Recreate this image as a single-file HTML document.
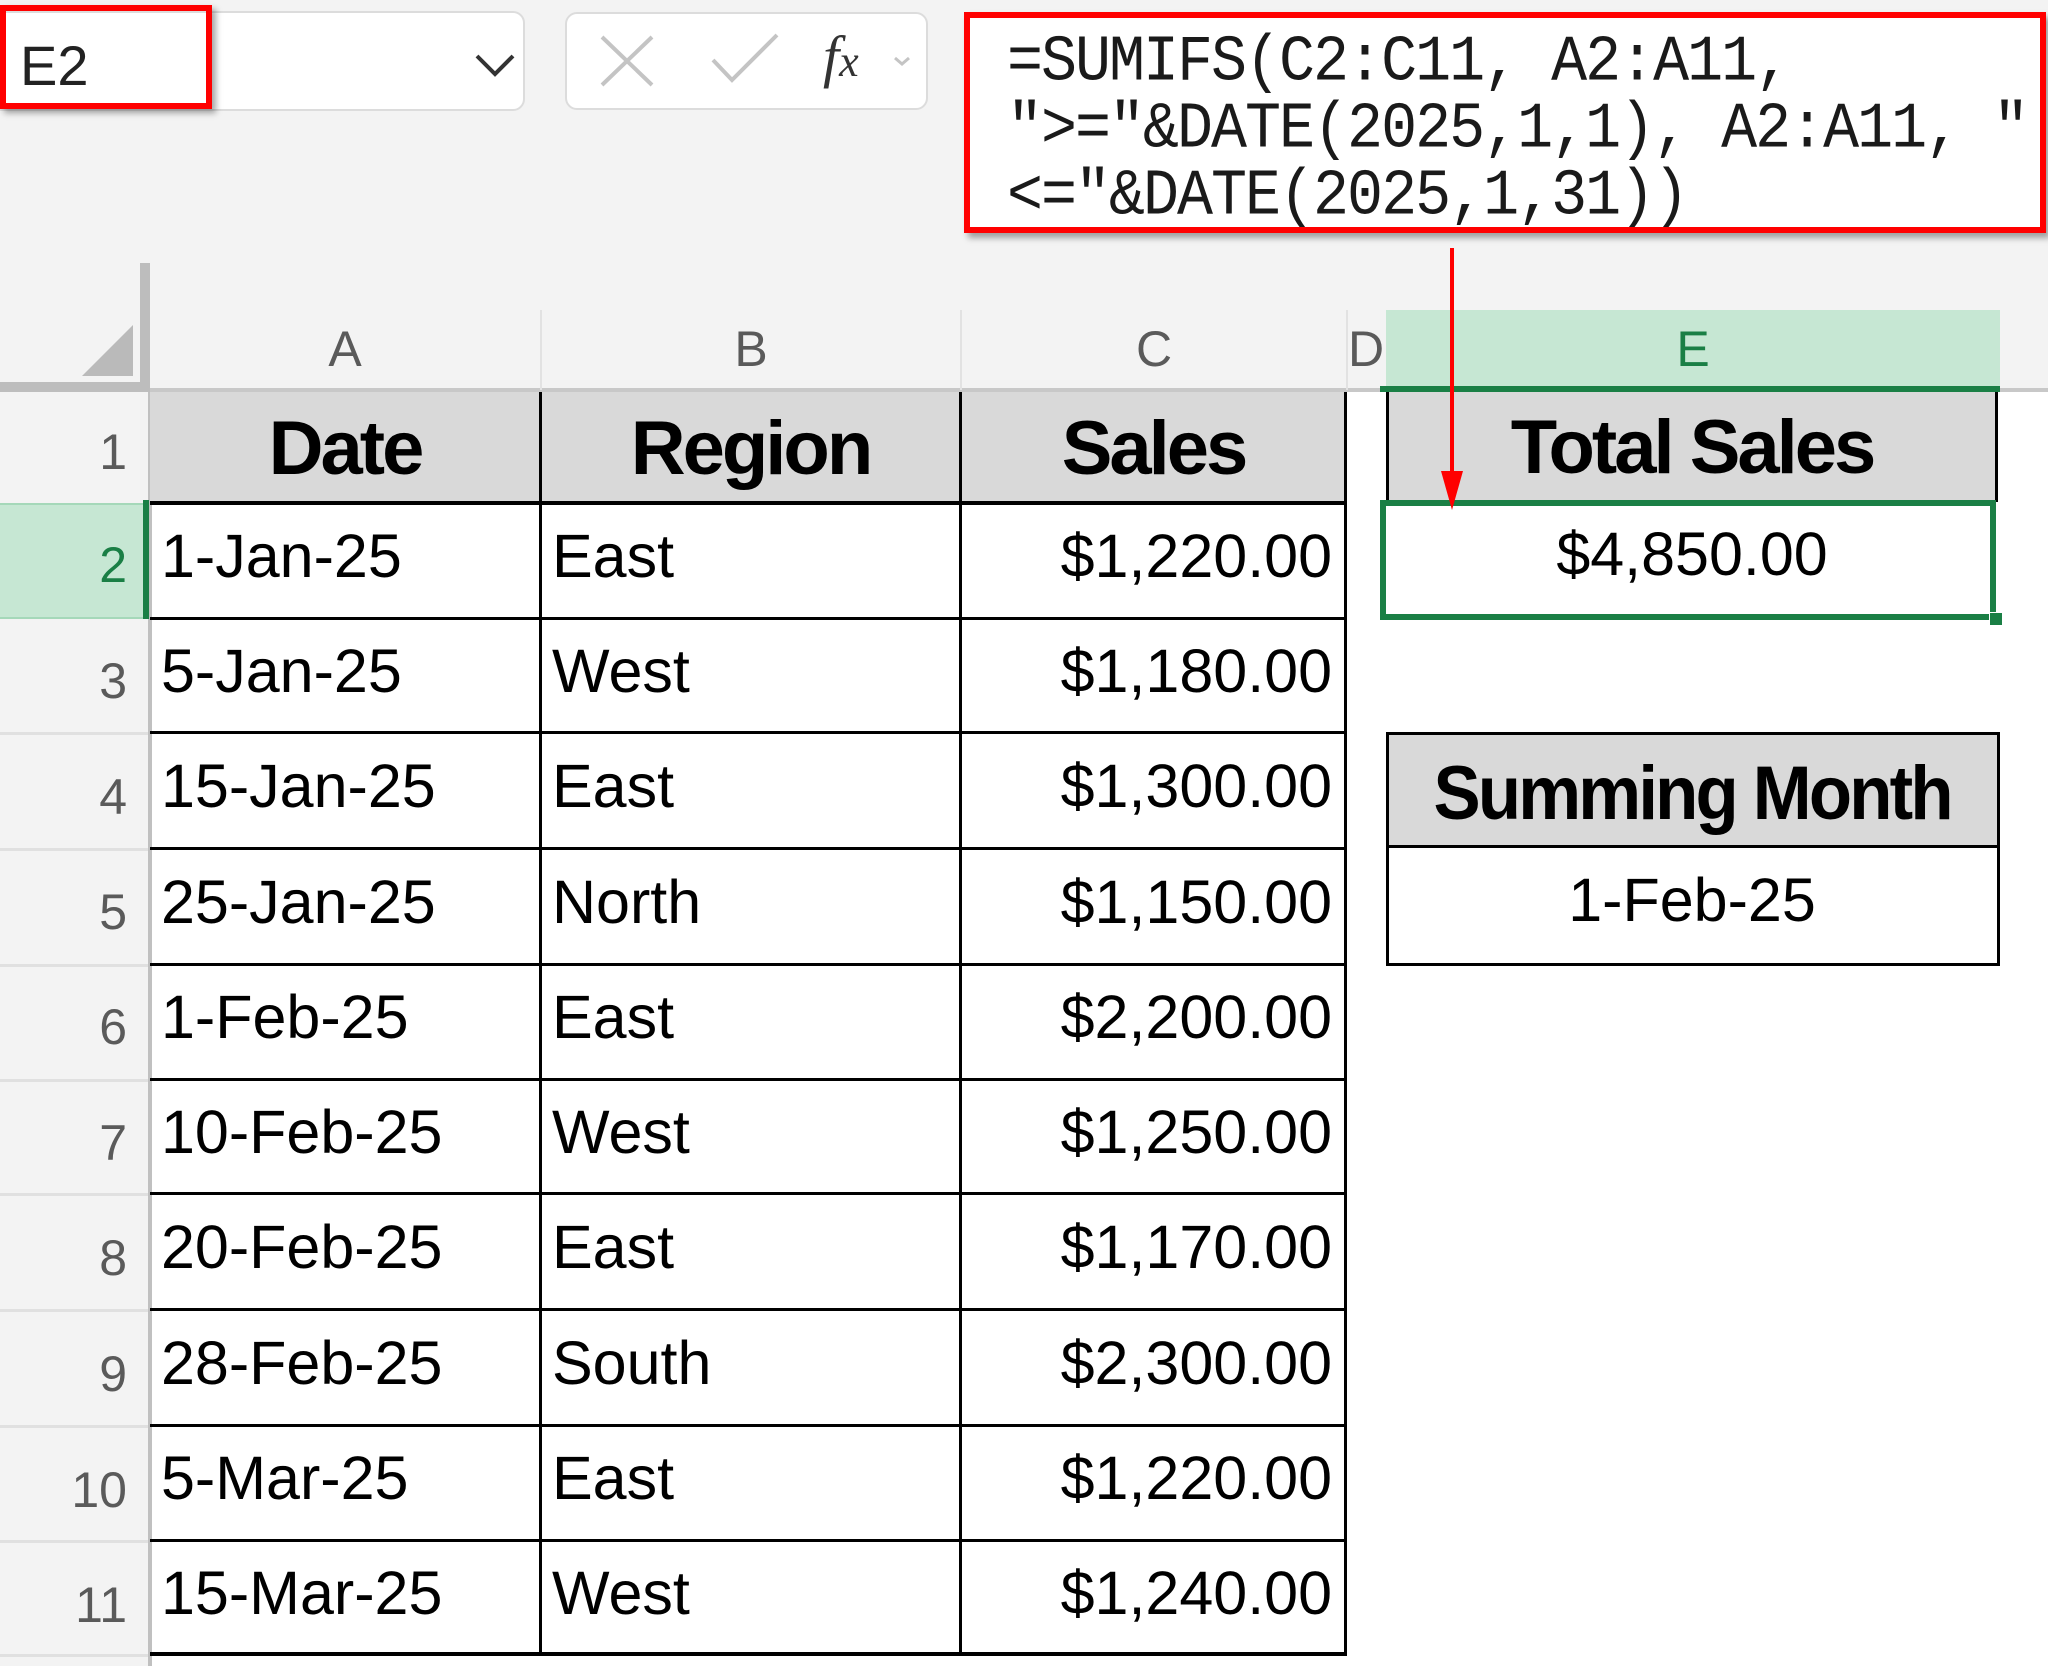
<!DOCTYPE html>
<html><head><meta charset="utf-8"><style>
*{margin:0;padding:0;box-sizing:border-box}
body{width:2048px;height:1666px;background:#f3f3f3;position:relative;overflow:hidden;font-family:"Liberation Sans",Arial,sans-serif}
.a{position:absolute}
.rn{position:absolute;left:0;width:127px;text-align:right;font-size:50px;color:#5a5a5a;line-height:1}
.cl{position:absolute;top:324px;font-size:50px;color:#5a5a5a;line-height:1;text-align:center}
.c{position:absolute;font-size:61px;color:#000;line-height:1;white-space:nowrap}
.h{position:absolute;font-size:76px;font-weight:bold;letter-spacing:-3px;color:#000;line-height:1;text-align:center;white-space:nowrap}
.mono{font-family:"Liberation Mono",monospace;font-size:60px;letter-spacing:-2px;color:#1a1a1a;position:absolute;left:1007px;line-height:1;white-space:pre;transform:scaleY(1.08);transform-origin:0 0}
</style></head><body>

<div class="a" style="left:-10px;top:11px;width:535px;height:100px;background:#fff;border:2px solid #dcdcdc;border-radius:12px"></div>
<div class="a" style="left:0;top:5px;width:212px;height:104px;border:6px solid #ff0000;box-shadow:4px 4px 6px rgba(0,0,0,.35)"></div>
<div class="a" style="left:20px;top:38px;font-size:56px;color:#222;line-height:1">E2</div>
<svg class="a" style="left:474px;top:50px" width="42" height="30"><path d="M3 6 L21 24 L39 6" fill="none" stroke="#333" stroke-width="4"/></svg>

<div class="a" style="left:565px;top:12px;width:363px;height:98px;background:#fff;border:2px solid #dcdcdc;border-radius:12px"></div>
<svg class="a" style="left:595px;top:30px" width="330" height="62">
<path d="M7 7 L57 55 M57 7 L7 55" stroke="#c4c4c4" stroke-width="4"/>
<path d="M118 30 L137 50 L182 5" fill="none" stroke="#c4c4c4" stroke-width="4"/>
<path d="M300 28 L307 34 L314 28" fill="none" stroke="#c4c4c4" stroke-width="3"/>
</svg>
<div class="a" style="left:823px;top:28px;font-family:'Liberation Serif',serif;font-style:italic;font-size:58px;color:#333;line-height:1">f<span style="font-size:44px">x</span></div>

<div class="a" style="left:964px;top:12px;width:1082px;height:221px;background:#fff;border:6px solid #ff0000;box-shadow:4px 5px 6px rgba(0,0,0,.35)"></div>
<div class="mono" style="top:31px">=SUMIFS(C2:C11, A2:A11,</div>
<div class="mono" style="top:98px">"&gt;="&amp;DATE(2025,1,1), A2:A11, "</div>
<div class="mono" style="top:165px">&lt;="&amp;DATE(2025,1,31))</div>

<div class="a" style="left:140px;top:263px;width:10px;height:129px;background:#bdbdbd"></div>
<div class="a" style="left:0;top:382px;width:150px;height:10px;background:#bdbdbd"></div>
<svg class="a" style="left:82px;top:325px" width="52" height="51"><path d="M51 0 L51 51 L0 51 Z" fill="#bababa"/></svg>

<div class="a" style="left:150px;top:388px;width:1898px;height:4px;background:#c8c8c8"></div>
<div class="a" style="left:540px;top:310px;width:2px;height:80px;background:#e2e2e2"></div>
<div class="a" style="left:960px;top:310px;width:2px;height:80px;background:#e2e2e2"></div>
<div class="a" style="left:1346px;top:310px;width:2px;height:80px;background:#e2e2e2"></div>
<div class="a" style="left:1386px;top:310px;width:614px;height:80px;background:#c6e7d3"></div>
<div class="a" style="left:1380px;top:386px;width:620px;height:6px;background:#1a7f45"></div>
<div class="cl" style="left:150px;width:390px">A</div>
<div class="cl" style="left:542px;width:418px">B</div>
<div class="cl" style="left:962px;width:384px">C</div>
<div class="cl" style="left:1348px;width:38px;text-align:left">D</div>
<div class="cl" style="left:1386px;width:614px;color:#1a7f45">E</div>

<div class="a" style="left:148px;top:392px;width:4px;height:1274px;background:#c0c0c0"></div>
<div class="a" style="left:0;top:503px;width:148px;height:116px;background:#c6e7d3;border-top:2px solid #a5d8b9;border-bottom:2px solid #a5d8b9"></div>
<div class="a" style="left:143px;top:500px;width:6px;height:119px;background:#1a7f45"></div>

<div class="a" style="left:152px;top:392px;width:1896px;height:1274px;background:#fff"></div>

<div class="a" style="left:150px;top:392px;width:1197px;height:111px;background:#d9d9d9"></div>
<svg class="a" style="left:0;top:0" width="2048" height="1666">
<g fill="#e0e0e0">
<rect x="0" y="732" width="148" height="3"/><rect x="0" y="848" width="148" height="3"/><rect x="0" y="964" width="148" height="3"/>
<rect x="0" y="1079" width="148" height="3"/><rect x="0" y="1193" width="148" height="3"/><rect x="0" y="1309" width="148" height="3"/>
<rect x="0" y="1425" width="148" height="3"/><rect x="0" y="1540" width="148" height="3"/><rect x="0" y="1654" width="148" height="3"/>
</g>
<g fill="#000">
<rect x="150" y="501" width="1197" height="4"/><rect x="150" y="617" width="1197" height="3"/>
<rect x="150" y="731" width="1197" height="3"/><rect x="150" y="847" width="1197" height="3"/>
<rect x="150" y="963" width="1197" height="3"/><rect x="150" y="1078" width="1197" height="3"/>
<rect x="150" y="1192" width="1197" height="3"/><rect x="150" y="1308" width="1197" height="3"/>
<rect x="150" y="1424" width="1197" height="3"/><rect x="150" y="1539" width="1197" height="3"/>
<rect x="150" y="1652" width="1197" height="4"/>
<rect x="539" y="392" width="3" height="1264"/><rect x="959" y="392" width="3" height="1264"/><rect x="1344" y="392" width="3" height="1264"/>
</g>
</svg>

<div class="h" style="left:150px;top:411px;width:390px">Date</div>
<div class="h" style="left:541px;top:411px;width:419px">Region</div>
<div class="h" style="left:961px;top:411px;width:385px">Sales</div>

<div class="rn" style="top:427px">1</div>
<div class="rn" style="top:540px;color:#1a7f45">2</div>
<div class="rn" style="top:656px">3</div>
<div class="rn" style="top:772px">4</div>
<div class="rn" style="top:887px">5</div>
<div class="rn" style="top:1002px">6</div>
<div class="rn" style="top:1118px">7</div>
<div class="rn" style="top:1233px">8</div>
<div class="rn" style="top:1349px">9</div>
<div class="rn" style="top:1465px">10</div>
<div class="rn" style="top:1580px">11</div>

<div class="c" style="left:161px;top:526px">1-Jan-25</div><div class="c" style="left:552px;top:526px">East</div><div class="c" style="right:716px;top:526px">$1,220.00</div>
<div class="c" style="left:161px;top:641px">5-Jan-25</div><div class="c" style="left:552px;top:641px">West</div><div class="c" style="right:716px;top:641px">$1,180.00</div>
<div class="c" style="left:161px;top:756px">15-Jan-25</div><div class="c" style="left:552px;top:756px">East</div><div class="c" style="right:716px;top:756px">$1,300.00</div>
<div class="c" style="left:161px;top:872px">25-Jan-25</div><div class="c" style="left:552px;top:872px">North</div><div class="c" style="right:716px;top:872px">$1,150.00</div>
<div class="c" style="left:161px;top:987px">1-Feb-25</div><div class="c" style="left:552px;top:987px">East</div><div class="c" style="right:716px;top:987px">$2,200.00</div>
<div class="c" style="left:161px;top:1102px">10-Feb-25</div><div class="c" style="left:552px;top:1102px">West</div><div class="c" style="right:716px;top:1102px">$1,250.00</div>
<div class="c" style="left:161px;top:1217px">20-Feb-25</div><div class="c" style="left:552px;top:1217px">East</div><div class="c" style="right:716px;top:1217px">$1,170.00</div>
<div class="c" style="left:161px;top:1333px">28-Feb-25</div><div class="c" style="left:552px;top:1333px">South</div><div class="c" style="right:716px;top:1333px">$2,300.00</div>
<div class="c" style="left:161px;top:1448px">5-Mar-25</div><div class="c" style="left:552px;top:1448px">East</div><div class="c" style="right:716px;top:1448px">$1,220.00</div>
<div class="c" style="left:161px;top:1563px">15-Mar-25</div><div class="c" style="left:552px;top:1563px">West</div><div class="c" style="right:716px;top:1563px">$1,240.00</div>

<div class="a" style="left:1386px;top:392px;width:612px;height:110px;background:#d9d9d9;border-left:3px solid #000;border-right:3px solid #000"></div>
<div class="h" style="left:1386px;top:410px;width:612px">Total Sales</div>
<div class="a" style="left:1380px;top:500px;width:616px;height:120px;border:6px solid #1a7f45"></div>
<div class="a" style="left:1989px;top:612px;width:14px;height:14px;background:#1a7f45;border:1px solid #fff"></div>
<div class="c" style="left:1386px;top:524px;width:612px;text-align:center">$4,850.00</div>

<div class="a" style="left:1386px;top:732px;width:614px;height:234px;border:3px solid #000"></div>
<div class="a" style="left:1389px;top:735px;width:608px;height:113px;background:#d9d9d9;border-bottom:3px solid #000"></div>
<div class="h" style="left:1386px;top:756px;width:612px"><span style="display:inline-block;transform:scaleX(.93)">Summing Month</span></div>
<div class="c" style="left:1386px;top:870px;width:612px;text-align:center">1-Feb-25</div>

<svg class="a" style="left:1430px;top:245px" width="50" height="275">
<line x1="22" y1="3" x2="22" y2="240" stroke="#ff0000" stroke-width="4"/>
<path d="M11 226 L33 226 L22 265 Z" fill="#ff0000"/>
</svg>
</body></html>
